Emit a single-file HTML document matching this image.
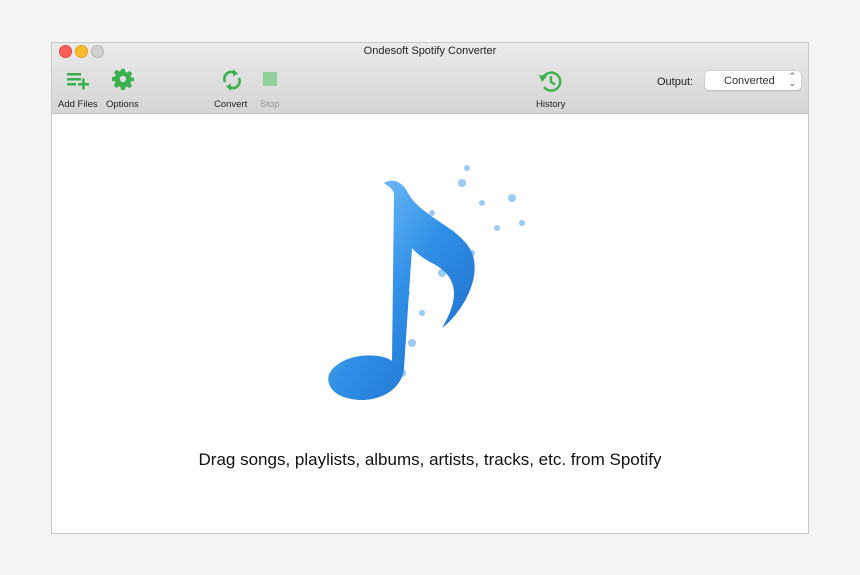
<!DOCTYPE html>
<html><head><style>
body{margin:0;width:860px;height:575px;background:#f4f4f4;font-family:"Liberation Sans",sans-serif;position:relative;overflow:hidden}
.win{position:absolute;left:51px;top:42px;width:758px;height:492px;background:#fff;border:1px solid #c8c8c8;box-sizing:border-box}
.bar{position:absolute;left:0;top:0;width:100%;height:70px;background:linear-gradient(#ebebeb,#d5d5d5);border-bottom:1px solid #bdbdbd}
.dot{position:absolute;top:2px;width:11px;height:11px;border-radius:50%}
.t{position:absolute;font-size:11px;color:#222}
.lbl{position:absolute;top:56px;font-size:9.5px;color:#222}
.ic{position:absolute}
</style></head><body>
<div class="win">
<div class="bar">
<div class="dot" style="left:7px;background:#fc5f57;border:0.5px solid #de4a42"></div>
<div class="dot" style="left:23px;background:#fdbc2e;border:0.5px solid #de9f1f"></div>
<div class="dot" style="left:39px;background:#d0d0d0;border:0.5px solid #b8b8b8"></div>
<div class="t" style="left:0;width:100%;text-align:center;top:2px">Ondesoft Spotify Converter</div>
<svg class="ic" style="left:15px;top:28px" width="24" height="20" viewBox="0 0 24 20"><g fill="#3bb04e"><rect x="0" y="2" width="14" height="2.5"/><rect x="0" y="7" width="14" height="2.5"/><rect x="0" y="12" width="9" height="2.5"/><rect x="11" y="12" width="11" height="2.5"/><rect x="15.2" y="7.5" width="2.5" height="11"/></g></svg>
<svg class="ic" style="left:60px;top:25px" width="22" height="22" viewBox="0 0 24 24"><path fill="#3bb04e" d="M10 1h4l.6 3.2 2 .9 2.7-1.9 2.8 2.8-1.9 2.7.9 2L24 10v4l-3.2.6-.9 2 1.9 2.7-2.8 2.8-2.7-1.9-2 .9L14 24h-4l-.6-3.2-2-.9-2.7 1.9-2.8-2.8 1.9-2.7-.9-2L0 14v-4l3.2-.6.9-2L2.2 4.7 5 1.9l2.7 1.9 2-.9z"/><circle cx="12" cy="12" r="3.5" fill="#ddd"/></svg>
<svg class="ic" style="left:169px;top:25px" width="22" height="24" viewBox="0 0 22 24"><g fill="none" stroke="#3bb04e" stroke-width="2.6"><path d="M4 14A7 7 0 0 1 14 5"/><path d="M18 10A7 7 0 0 1 8 19"/></g><path fill="#3bb04e" d="M12 1l5 4.5-5 3z M10 23l-5-4.5 5-3z"/></svg>
<div class="ic" style="left:211px;top:29px;width:14px;height:14px;background:#8fd29b"></div>
<svg class="ic" style="left:486px;top:27px" width="24" height="22" viewBox="0 0 24 22"><g fill="none" stroke="#3bb04e" stroke-width="2.4"><path d="M5 8A9 9 0 1 1 6 17"/><path d="M13 6v6l4 2.5"/></g><path fill="#3bb04e" d="M1 5l8 1-5 6z"/></svg>
<div class="lbl" style="left:6px">Add Files</div>
<div class="lbl" style="left:54px">Options</div>
<div class="lbl" style="left:162px">Convert</div>
<div class="lbl" style="left:208px;color:#999">Stop</div>
<div class="lbl" style="left:484px">History</div>
<div class="t" style="left:605px;top:33px">Output:</div>
<div style="position:absolute;left:653px;top:28px;width:96px;height:19px;background:#fff;border-radius:4px;box-shadow:0 0 0 0.5px #bbb,0 1px 1px #bbb"><span style="position:absolute;left:19px;top:4px;font-size:11px;color:#333">Converted</span><span style="position:absolute;right:5px;top:2px;font-size:9px;color:#555;line-height:7px">⌃<br>⌄</span></div>
</div>
<svg style="position:absolute;left:260px;top:110px" width="240" height="260" viewBox="0 0 240 260">
<defs><linearGradient id="g" x1="0" y1="0" x2="1" y2="1"><stop offset="0" stop-color="#8fd0ff"/><stop offset=".5" stop-color="#2f8fe6"/><stop offset="1" stop-color="#1a66c4"/></linearGradient></defs>
<g fill="#4aa0ea" opacity=".55">
<circle cx="150" cy="30" r="4"/><circle cx="170" cy="50" r="3"/><circle cx="200" cy="45" r="4"/><circle cx="140" cy="80" r="3"/><circle cx="185" cy="75" r="3"/><circle cx="130" cy="120" r="4"/><circle cx="110" cy="160" r="3"/><circle cx="100" cy="190" r="4"/><circle cx="160" cy="100" r="3"/><circle cx="120" cy="60" r="3"/><circle cx="95" cy="140" r="3"/><circle cx="210" cy="70" r="3"/><circle cx="90" cy="220" r="4"/><circle cx="155" cy="15" r="3"/>
</g>
<path fill="url(#g)" d="M72 30 C80 25 90 28 96 40 C110 65 150 75 160 100 C170 125 150 160 130 175 C145 150 150 125 120 110 C112 106 104 100 100 95 L92 215 C90 240 60 252 35 245 C15 240 10 222 25 212 C40 200 70 200 80 208 L82 40 C80 35 76 33 72 30Z"/>
</svg>
<div style="position:absolute;left:0;width:100%;top:407px;text-align:center;font-size:17px;color:#111">Drag songs, playlists, albums, artists, tracks, etc. from Spotify</div>
</div>
</body></html>
